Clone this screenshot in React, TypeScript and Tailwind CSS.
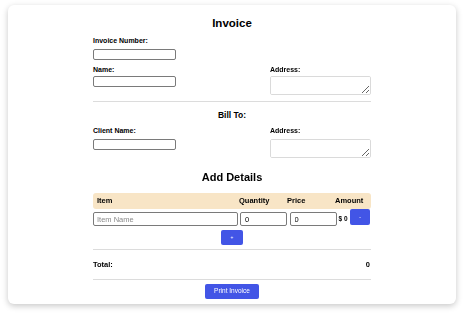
import React from "react";

const inputCls =
  "block h-[11px] w-[83px] rounded-[2px] border border-[#7a7a7a] bg-white";
const areaCls =
  "block h-[19.5px] w-[101px] rounded-[2px] border border-[#dadada] bg-white";
const labelCls = "block text-[7px] font-bold leading-[10px] text-black";

export default function App() {
  return (
    <div
      className="min-h-screen bg-white pl-[8px] pt-[5px]"
      style={{ fontFamily: '"Liberation Sans", Arial, sans-serif' }}
    >
      <div className="flex w-[448px] flex-col items-center rounded-[6px] bg-white pb-[4.5px] pt-[11px] shadow-[0_2px_6px_rgba(0,0,0,0.22)]">
        <div className="w-[278px]">
          <h1 className="text-center text-[11.5px] font-bold leading-[14px]">
            Invoice
          </h1>

          <label className={`${labelCls} mt-[5.5px]`}>Invoice Number:</label>
          <input className={`${inputCls} mt-[3.5px]`} />

          <div className="mt-[4.5px] flex justify-between">
            <div>
              <label className={labelCls}>Name:</label>
              <input className={`${inputCls} mt-[1px]`} />
            </div>
            <div>
              <label className={labelCls}>Address:</label>
              <textarea className={`${areaCls} mt-[1px]`} />
            </div>
          </div>

          <hr className="mt-[5.5px] border-t border-[#dcdcdc]" />

          <h2 className="mt-[8.5px] text-center text-[8.5px] font-bold leading-[11px]">
            Bill To:
          </h2>

          <div className="mt-[5px] flex justify-between">
            <div>
              <label className={labelCls}>Client Name:</label>
              <input className={`${inputCls} mt-[3px]`} />
            </div>
            <div>
              <label className={labelCls}>Address:</label>
              <textarea className={`${areaCls} mt-[2.5px]`} />
            </div>
          </div>

          <h2 className="mt-[13px] text-center text-[11px] font-bold leading-[13px]">
            Add Details
          </h2>

          <div className="mt-[9px] flex h-[15.5px] items-center rounded-[3px] bg-[#f8e5c6] text-[7.5px] font-bold">
            <div className="w-[146px] pl-[4px]">Item</div>
            <div className="w-[48px]">Quantity</div>
            <div className="w-[48px]">Price</div>
            <div>Amount</div>
          </div>

          <div className="flex items-start">
            <input
              placeholder="Item Name"
              className="mt-[3.5px] h-[14px] w-[144.5px] rounded-[2px] border border-[#7a7a7a] px-[3px] text-[7.5px] placeholder:text-[#8a8a8a]"
            />
            <input
              defaultValue="0"
              className="ml-[2.5px] mt-[3.5px] h-[14px] w-[47px] rounded-[2px] border border-[#7a7a7a] px-[4px] text-[7.5px]"
            />
            <input
              defaultValue="0"
              className="ml-[2.5px] mt-[3.5px] h-[14px] w-[47px] rounded-[2px] border border-[#7a7a7a] px-[4px] text-[7.5px]"
            />
            <span className="ml-[2px] mt-[5.5px] text-[6.5px] font-bold leading-[10px]">
              $ 0
            </span>
            <button className="ml-[2.5px] h-[16px] w-[20px] rounded-[2px] bg-[#4255e6] text-[5px] leading-[16px] text-white">
              -
            </button>
          </div>

          <div className="mt-[3.5px] flex justify-center">
            <button className="h-[15.5px] w-[22px] rounded-[2px] bg-[#4255e6] text-[5px] text-white">
              +
            </button>
          </div>

          <hr className="mt-[3.5px] border-t border-[#dcdcdc]" />

          <div className="mt-[10.5px] flex justify-between text-[7.5px] font-bold leading-[10px]">
            <span>Total:</span>
            <span className="pr-[1px]">0</span>
          </div>

          <hr className="mt-[9px] border-t border-[#dcdcdc]" />

          <div className="mt-[3.5px] flex justify-center">
            <button className="h-[15.5px] w-[54px] rounded-[2px] bg-[#4255e6] text-[6.5px] text-white">
              Print Invoice
            </button>
          </div>
        </div>
      </div>
    </div>
  );
}
